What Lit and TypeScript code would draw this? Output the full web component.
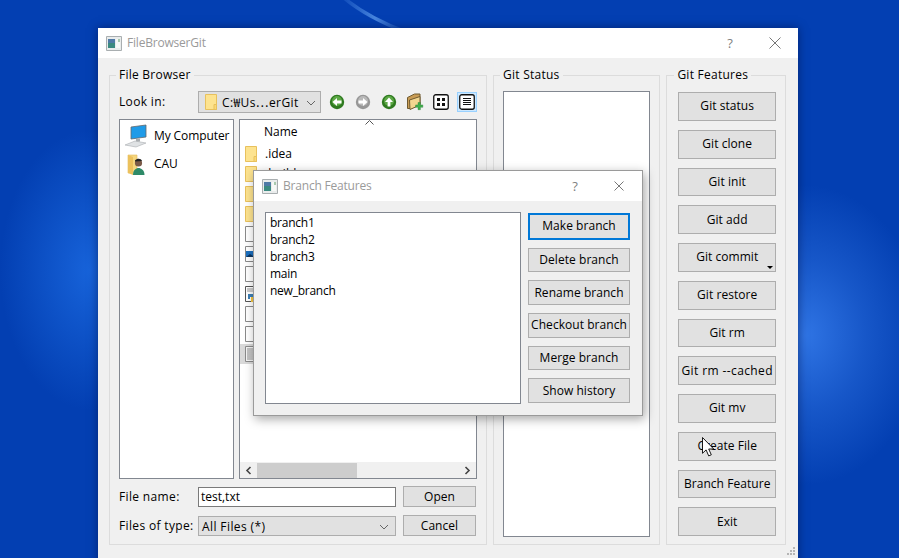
import { LitElement, html, css } from "lit";
import { customElement } from "lit/decorators.js";

const folder = html`<svg class="ic" width="12" height="16" viewBox="0 0 12 16"><path d="M.5.5h11v15H.5z" fill="#fde38f" stroke="#e8c15d"/><path d="M9 15.5v-5h2.5v5z" fill="#fbd976" stroke="#e8c15d"/></svg>`;
const doc = html`<svg class="ic" width="12" height="16" viewBox="0 0 12 16"><path d="M.5.5h11v15H.5z" fill="#fff" stroke="#8a8a8a"/></svg>`;
const picture = html`<svg class="ic" width="12" height="16" viewBox="0 0 12 16"><path d="M.5.5h11v15H.5z" fill="#fff" stroke="#8a8a8a"/><path d="M1 5h10v6H1z" fill="#1b6fbf"/><path d="M1 11l4-3 3 2 3-1v2H1z" fill="#0b3560"/></svg>`;
const py = html`<svg class="ic" width="12" height="16" viewBox="0 0 12 16"><path d="M.5.5h11v15H.5z" fill="#fff" stroke="#555"/><path d="M2 3h7M2 5h7" stroke="#999"/><path d="M3 8h5v3H5v2H3z" fill="#3d7fb5"/><path d="M6 11h5v3H8v2H6z" fill="#f4c63f"/></svg>`;
const textDoc = html`<svg class="ic" width="12" height="16" viewBox="0 0 12 16"><path d="M.5.5h11v15H.5z" fill="#f4f4f4" stroke="#8a8a8a"/><path d="M2 3h8M2 5h8M2 7h8M2 9h8M2 11h8M2 13h8" stroke="#8f8f8f"/></svg>`;

const winIcon = html`<svg class="win-ic" width="16" height="15" viewBox="0 0 16 15"><path d="M.5.5h15v14H.5z" fill="#e9ecec" stroke="#a9aeb0"/><path d="M2 3h7v9H2z" fill="#3b8a80"/><path d="M2 3h7v4H2z" fill="#4f7aa6"/><path d="M10 3h4v9h-4z" fill="#f6f8f6"/><path d="M12 3h2v3h-2z" fill="#a9c9ae"/></svg>`;
const closeX = html`<svg class="x" width="12" height="12" viewBox="0 0 12 12"><path d="M.5.5l11 11M11.5.5l-11 11" stroke="#777" fill="none"/></svg>`;
const closeXs = html`<svg class="x" width="10" height="10" viewBox="0 0 10 10"><path d="M.5.5l9 9M9.5.5l-9 9" stroke="#777" fill="none"/></svg>`;
const chev = html`<svg class="chev" width="10" height="6" viewBox="0 0 10 6"><path d="M1 1l4 4 4-4" stroke="#666" fill="none"/></svg>`;

const circleBtn = (outer: string, inner: string, d: string) => html`<svg width="16" height="16" viewBox="0 0 16 16"><circle cx="8" cy="8" r="7.2" fill="${outer}"/><circle cx="8" cy="7" r="5" fill="${inner}"/><path d="${d}" fill="#fff"/></svg>`;

const FEATURES = ["Git status", "Git clone", "Git init", "Git add", "Git commit", "Git restore", "Git rm", "Git rm --cached", "Git mv", "Create File", "Branch Feature", "Exit"];
const BRANCH_BUTTONS = ["Make branch", "Delete branch", "Rename branch", "Checkout branch", "Merge branch", "Show history"];
const BRANCHES = ["branch1", "branch2", "branch3", "main", "new_branch"];

@customElement("app-root")
export class AppRoot extends LitElement {
  static styles = css`
    :host { display: block; width: 899px; height: 558px; position: relative; overflow: hidden;
      font: 12px "Open Sans", "Noto Sans CJK KR", sans-serif; color: #000;
      background:
        radial-gradient(ellipse 120px 150px at 805px 335px, #2f74e4 0%, rgba(47,116,228,.45) 50%, rgba(47,116,228,0) 100%),
        radial-gradient(ellipse 90px 140px at 90px 270px, #1763da 0%, rgba(23,99,218,.5) 50%, rgba(23,99,218,0) 100%),
        #033fb2; }
    .streak { position: absolute; left: 330px; top: -6px; width: 90px; height: 40px; }
    .main { position: absolute; left: 98px; top: 28px; width: 700px; height: 540px; background: #f0f0f0;
      box-shadow: 0 0 9px rgba(0,15,60,.55); display: flex; flex-direction: column; }
    .title { height: 30px; background: #fff; display: flex; align-items: center; flex: none; color: #9a9a9a; padding-left: 8px; }
    .win-ic { flex: none; margin-right: 5px; }
    .t-text { flex: 1; line-height: 16px; letter-spacing: -.2px; }
    .q { color: #808080; font-size: 13px; width: 12px; text-align: center; margin-right: 33px; }
    .main .x { margin-right: 17px; }
    .dialog .x { margin-right: 18px; }
    .body { display: flex; gap: 6px; padding: 17px 12px 0 11px; flex: none; }
    .group { border: 1px solid #dcdcdc; box-sizing: border-box; height: 470px; display: flex; flex-direction: column; }
    .legend { background: #f0f0f0; width: fit-content; margin: -9px 0 0 -3px; padding: 0 3px; height: 15px; line-height: 16px; flex: none; letter-spacing: .25px; }
    .fb { width: 378px; padding: 0 9px 8px 9px; }
    .gs { width: 168px; padding: 0 9px 7px 9px; }
    .gf { width: 120px; padding: 0 10px 8px 10px; }
    .top { display: flex; align-items: center; height: 22px; margin-top: 9px; flex: none; }
    .lab { width: 79px; flex: none; line-height: 16px; box-sizing: border-box; letter-spacing: .35px; }
    .combo { box-sizing: border-box; background: #e1e1e1; border: 1px solid #adadad; display: flex; align-items: center; position: relative; letter-spacing: .4px; }
    .combo.look { width: 123px; height: 22px; padding-left: 6px; gap: 5px; }
    .combo .chev { position: absolute; right: 4px; top: 8px; }
    .combo.type .chev { top: 7px; right: 6px; }
    .tools { display: flex; align-items: center; margin-left: 3px; }
    .slot { width: 26px; height: 22px; display: flex; align-items: center; justify-content: center; flex: none; }
    .hot { width: 20px; height: 20px; box-sizing: border-box; margin-left: 3px; background: #cce8ff; border: 1px solid #99d1ff; display: flex; align-items: center; justify-content: center; }
    .panes { flex: 1; display: flex; gap: 5px; margin-top: 6px; min-height: 0; }
    .pane { border: 1px solid #828790; background: #fff; box-sizing: border-box; position: relative; }
    .side { width: 115px; padding-top: 2px; }
    .side-row { display: flex; align-items: center; height: 28px; padding-left: 4px; gap: 6px; line-height: 16px; letter-spacing: -.1px; }
    .side-ic { width: 24px; height: 24px; flex: none; }
    .files { flex: 1; display: flex; flex-direction: column; overflow: hidden; }
    .head { height: 24px; padding-left: 24px; line-height: 24px; flex: none; position: relative; }
    .sort { position: absolute; left: 125px; top: 0; }
    .rows { flex: 1; min-height: 0; }
    .row { height: 20px; display: flex; align-items: center; padding-left: 5px; gap: 8px; line-height: 20px; }
    .row.sel { background: #d9d9d9; }
    .ic { flex: none; }
    .hbar { height: 16px; flex: none; background: #f0f0f0; display: flex; align-items: center; }
    .arrow { width: 17px; display: flex; justify-content: center; flex: none; }
    .thumb { width: 100px; height: 15px; background: #cdcdcd; flex: none; }
    .track { flex: 1; }
    .foot { display: grid; grid-template-columns: 79px 198px 73px; row-gap: 8px; grid-template-rows: 21px 21px; margin-top: 7px; flex: none; align-items: center; }
    .foot button { margin-left: 7px; width: 73px; height: 21px; }
    .input { box-sizing: border-box; height: 20px; align-self: end; background: #fff; border: 1px solid #7a7a7a; padding-left: 2px; line-height: 17px; }
    .combo.type { height: 20px; align-self: end; padding-left: 3px; }
    button { font: inherit; letter-spacing: .05px; color: #000; background: #e1e1e1; border: 1px solid #adadad; padding: 0; margin: 0; box-sizing: border-box; position: relative; line-height: 16px; white-space: nowrap; }
    button.wide { letter-spacing: .4px; }
    .status { flex: 1; margin-top: 9px; border: 1px solid #828790; background: #fff; }
    .fstack { flex: 1; display: flex; flex-direction: column; gap: 9px; margin: 10px -1px 0 1px; }
    .fstack button { flex: 1; }
    .menu-tri { position: absolute; right: 2px; bottom: 2px; width: 0; height: 0; border: 3px solid transparent; border-top-color: #000; border-bottom: 0; }
    .grip { position: absolute; right: 3px; bottom: 12px; }
    .dialog { position: absolute; left: 253px; top: 170px; width: 390px; height: 246px; box-sizing: border-box; background: #f0f0f0; border: 1px solid #9a9a9a;
      box-shadow: 2px 3px 10px rgba(0,0,0,.35); display: flex; flex-direction: column; }
    .dialog .t-text { padding-bottom: 1px; }
    .d-body { flex: 1; display: flex; gap: 7px; padding: 11px 12px 11px 11px; min-height: 0; }
    .list { flex: 1; border: 1px solid #828790; background: #fff; padding: 1px 0 0 4px; box-sizing: border-box; letter-spacing: -.25px; }
    .list div { height: 17px; line-height: 17px; }
    .d-btns { width: 102px; display: flex; flex-direction: column; gap: 8px; padding: 1px 0; flex: none; box-sizing: border-box; }
    .d-btns button { flex: 1; }
    .d-btns .def { border: 2px solid #0078d7; }
    .cursor { position: absolute; left: 702px; top: 437px; pointer-events: none; }
  `;

  render() {
    const icons = [folder, folder, folder, folder, doc, picture, doc, py, doc, doc, textDoc];
    return html`
      <svg class="streak" viewBox="0 0 90 40"><defs><linearGradient id="s" x1="0" x2="1"><stop offset="0" stop-color="#4f8fe8" stop-opacity=".2"/><stop offset=".5" stop-color="#5f9cec" stop-opacity=".75"/><stop offset="1" stop-color="#4f8fe8" stop-opacity=".1"/></linearGradient></defs><path d="M14 4C26 14 44 26 76 38" stroke="url(#s)" stroke-width="3.5" fill="none"/></svg>
      <div class="main">
        <div class="title">${winIcon}<span class="t-text">FileBrowserGit</span><span class="q">?</span>${closeX}</div>
        <div class="body">
          <div class="group fb">
            <div class="legend">File Browser</div>
            <div class="top">
              <span class="lab">Look in:</span>
              <div class="combo look">${folder}<span>C:₩Us⋯erGit</span>${chev}</div>
              <div class="tools">
                <span class="slot">${circleBtn("#2f7a20", "#5ca845", "M3.5 8L8 4v2.6h4.5v2.8H8V12z")}</span>
                <span class="slot">${circleBtn("#979797", "#b8b8b8", "M12.5 8L8 4v2.6H3.5v2.8H8V12z")}</span>
                <span class="slot">${circleBtn("#2f7a20", "#5ca845", "M8 3.5L12 8H9.4v4.5H6.6V8H4z")}</span>
                <span class="slot"><svg width="18" height="18" viewBox="0 0 18 18"><path d="M1.5 4.5l7-3.5h5.5v10l-9 4.5H1.5z" fill="#c99c55" stroke="#6f5a30"/><path d="M3.5 7l10.5-3.5v8.5l-10 4.5z" fill="#f2d690" stroke="#6f5a30"/><path d="M12 9.5h2.4v2.4h2.4v2.4h-2.4v2.4H12v-2.4H9.6v-2.4H12z" fill="#3fae4c" stroke="#2b7f36" stroke-width=".4"/></svg></span>
                <span class="slot"><svg width="16" height="16" viewBox="0 0 16 16"><rect x=".75" y=".75" width="14.5" height="14.5" rx="2" fill="#fff" stroke="#111" stroke-width="1.3"/><path d="M4 4h3v3H4zM9 4h3v3H9zM4 9h3v3H4zM9 9h3v3H9z" fill="#111"/></svg></span>
                <span class="hot"><svg width="16" height="16" viewBox="0 0 16 16"><rect x=".75" y=".75" width="14.5" height="14.5" rx="2" fill="#fff" stroke="#111" stroke-width="1.3"/><path d="M4 4.5h8M4 6.5h8M4 8.5h8M4 10.5h8" stroke="#111"/></svg></span>
              </div>
            </div>
            <div class="panes">
              <div class="pane side">
                <div class="side-row">
                  <svg class="side-ic" viewBox="0 0 24 24"><path d="M7 2l15-2v12l-15 2z" fill="#1f9be8" stroke="#66686b" stroke-width=".8" transform="translate(0 1)"/><path d="M12 15l4-.5v3l-4 .5z" fill="#a9adb0"/><path d="M1 21l10-4 11 2-10 4z" fill="#dfe2e4" stroke="#a9adb0" stroke-width=".6"/></svg>
                  <span>My Computer</span>
                </div>
                <div class="side-row">
                  <svg class="side-ic" viewBox="0 0 24 24"><path d="M4 3l9 0v17l-9 1z" fill="#f5d67f" stroke="#e0b95a" stroke-width=".6"/><path d="M4 3l5 2v18l-5-2z" fill="#ecc15c"/><circle cx="14.5" cy="11" r="3.6" fill="#7a5a48"/><path d="M11 8.5c2-2.6 6-2.4 7 .5l-7 .5z" fill="#222"/><path d="M9 23c0-5 3-7 5.5-7s6 2 6 7z" fill="#2e8a68"/></svg>
                  <span>CAU</span>
                </div>
              </div>
              <div class="pane files">
                <div class="head">Name<svg class="sort" width="9" height="5" viewBox="0 0 9 5"><path d="M.5 4.5l4-4 4 4" stroke="#555" fill="none"/></svg></div>
                <div class="rows">
                  ${icons.map((ic, i) => html`<div class="row ${i === 10 ? "sel" : ""}">${ic}${i === 0 ? html`<span>.idea</span>` : i === 1 ? html`<span>.build</span>` : ""}</div>`)}
                </div>
                <div class="hbar">
                  <span class="arrow"><svg width="7" height="9" viewBox="0 0 7 9"><path d="M5.5 1L2 4.5 5.5 8" stroke="#444" stroke-width="1.6" fill="none"/></svg></span>
                  <span class="thumb"></span><span class="track"></span>
                  <span class="arrow"><svg width="7" height="9" viewBox="0 0 7 9"><path d="M1.5 1L5 4.5 1.5 8" stroke="#444" stroke-width="1.6" fill="none"/></svg></span>
                </div>
              </div>
            </div>
            <div class="foot">
              <span class="lab">File name:</span>
              <div class="input">test,txt</div>
              <button>Open</button>
              <span class="lab">Files of type:</span>
              <div class="combo type"><span>All Files (*)</span>${chev}</div>
              <button>Cancel</button>
            </div>
          </div>
          <div class="group gs">
            <div class="legend">Git Status</div>
            <div class="status"></div>
          </div>
          <div class="group gf">
            <div class="legend">Git Features</div>
            <div class="fstack">
              ${FEATURES.map((f) => html`<button class="${f === "Git rm --cached" ? "wide" : ""}">${f}${f === "Git commit" ? html`<span class="menu-tri"></span>` : ""}</button>`)}
            </div>
          </div>
        </div>
        <svg class="grip" width="9" height="9" viewBox="0 0 9 9" fill="#b5b5b5"><path d="M7 0h2v2H7zM4 3h2v2H4zM7 3h2v2H7zM1 6h2v2H1zM4 6h2v2H4zM7 6h2v2H7z"/></svg>
      </div>
      <div class="dialog">
        <div class="title">${winIcon}<span class="t-text">Branch Features</span><span class="q">?</span>${closeXs}</div>
        <div class="d-body">
          <div class="list">${BRANCHES.map((b) => html`<div>${b}</div>`)}</div>
          <div class="d-btns">${BRANCH_BUTTONS.map((b, i) => html`<button class="${i === 0 ? "def" : ""}">${b}</button>`)}</div>
        </div>
      </div>
      <svg class="cursor" width="13" height="20" viewBox="0 0 13 20"><path d="M.5.5v15.8l3.6-3.4 2.6 6 2.6-1.1-2.6-5.8h5z" fill="#fff" stroke="#000" stroke-width=".9"/></svg>
    `;
  }
}
